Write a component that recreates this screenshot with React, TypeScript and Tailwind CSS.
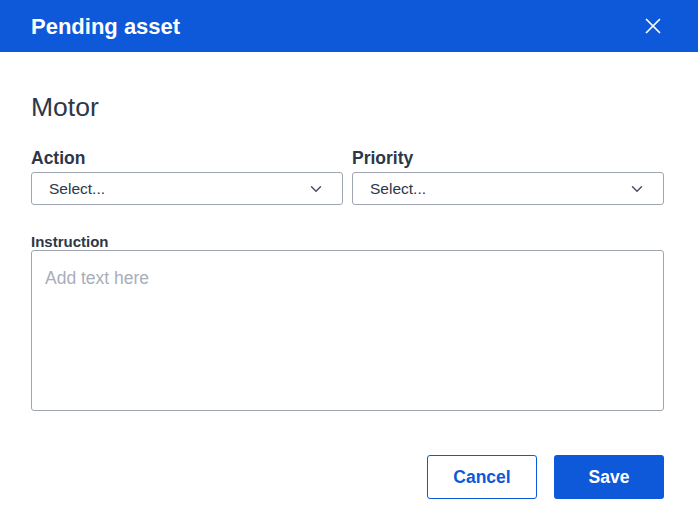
import { ChevronDown, X } from "lucide-react";

function SelectBox() {
  return (
    <div className="flex h-[33px] items-center justify-between rounded-[3px] border border-[#a0a6b1] bg-white pl-[17px] pr-[17px]">
      <span className="text-[15.5px] text-[#2d3748]">Select...</span>
      <ChevronDown size={18} strokeWidth={2} className="text-[#4a5261]" />
    </div>
  );
}

export default function App() {
  return (
    <div
      className="h-[518px] w-[698px] bg-white"
      style={{ fontFamily: "'Liberation Sans', Arial, sans-serif" }}
    >
      <div className="flex h-[52px] items-center justify-between bg-[#0d59d9] pl-[31px] pr-[32px]">
        <h1 className="text-[22px] font-bold text-white">Pending asset</h1>
        <X size={26} strokeWidth={1.6} className="text-white" />
      </div>

      <div className="px-[31px] pt-[39px]">
        <h2 className="text-[26.5px] leading-[32px] text-[#2d3748]">Motor</h2>

        <div className="mt-[26px] grid grid-cols-2 gap-[9px] pr-[3px]">
          <div>
            <label className="block text-[17.5px] font-bold leading-[18px] text-[#2d3748]">
              Action
            </label>
            <div className="mt-[5px]">
              <SelectBox />
            </div>
          </div>
          <div>
            <label className="block text-[17.5px] font-bold leading-[18px] text-[#2d3748]">
              Priority
            </label>
            <div className="mt-[5px]">
              <SelectBox />
            </div>
          </div>
        </div>

        <label className="mt-[28px] block text-[15px] font-bold leading-[17px] text-[#2d3748]">
          Instruction
        </label>
        <textarea
          placeholder="Add text here"
          className="block h-[161px] w-[633px] resize-none rounded-[3px] border border-[#a0a6b1] px-[13px] pb-[14px] pt-[14px] text-[17.5px] text-[#2d3748] outline-none placeholder:text-[#a9aeb8]"
        />

        <div className="mt-[44px] flex justify-end gap-[17px] pr-[3px]">
          <button className="h-[44px] w-[110px] rounded-[3px] border border-[#0d59d9] bg-white text-[17.5px] font-bold text-[#0d59d9]">
            Cancel
          </button>
          <button className="h-[44px] w-[110px] rounded-[3px] bg-[#0d59d9] text-[17.5px] font-bold text-white">
            Save
          </button>
        </div>
      </div>
    </div>
  );
}
